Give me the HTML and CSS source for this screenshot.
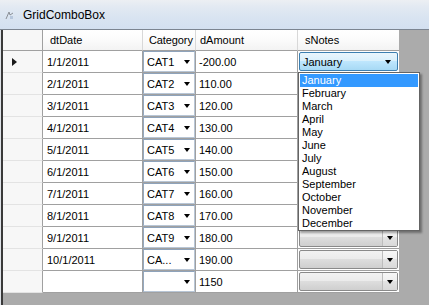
FILE: index.html
```html
<!DOCTYPE html>
<html>
<head>
<meta charset="utf-8">
<link rel="stylesheet" href="styles.css">
</head>
<body>
<div class="window">
  <div class="titlebar">
    <svg class="appicon" width="9" height="9" viewBox="0 0 9 9">
      <path d="M1 8 L4 1 L5 4 L8 2" fill="none" stroke="#8a8f96" stroke-width="1"/>
      <rect x="5" y="5" width="3" height="3" fill="#b7c7dc"/>
    </svg>
    <span class="title">GridComboBox</span>
  </div>
  <div class="client">
    <div class="frame"></div>
    <div class="area">
      <div class="grid">
        <div class="hcell corner"></div>
        <div class="hcell h-date">dtDate</div>
        <div class="hcell h-cat">Category</div>
        <div class="hcell h-amt">dAmount</div>
        <div class="hcell h-notes">sNotes</div>

        <div class="rh"><span class="pointer"></span></div>
        <div class="cell date">1/1/2011</div>
        <div class="cell cat"><div class="combo"><span class="ctext">CAT1</span><span class="arr"></span></div></div>
        <div class="cell amt">-200.00</div>
        <div class="cell notes"><div class="bcombo"><span class="ctext">January</span><span class="arr"></span></div></div>

        <div class="rh"></div>
        <div class="cell date">2/1/2011</div>
        <div class="cell cat"><div class="combo"><span class="ctext">CAT2</span><span class="arr"></span></div></div>
        <div class="cell amt">110.00</div>
        <div class="cell notes"><div class="gcombo"><span class="gbtn"><span class="arr"></span></span></div></div>

        <div class="rh"></div>
        <div class="cell date">3/1/2011</div>
        <div class="cell cat"><div class="combo"><span class="ctext">CAT3</span><span class="arr"></span></div></div>
        <div class="cell amt">120.00</div>
        <div class="cell notes"><div class="gcombo"><span class="gbtn"><span class="arr"></span></span></div></div>

        <div class="rh"></div>
        <div class="cell date">4/1/2011</div>
        <div class="cell cat"><div class="combo"><span class="ctext">CAT4</span><span class="arr"></span></div></div>
        <div class="cell amt">130.00</div>
        <div class="cell notes"><div class="gcombo"><span class="gbtn"><span class="arr"></span></span></div></div>

        <div class="rh"></div>
        <div class="cell date">5/1/2011</div>
        <div class="cell cat"><div class="combo"><span class="ctext">CAT5</span><span class="arr"></span></div></div>
        <div class="cell amt">140.00</div>
        <div class="cell notes"><div class="gcombo"><span class="gbtn"><span class="arr"></span></span></div></div>

        <div class="rh"></div>
        <div class="cell date">6/1/2011</div>
        <div class="cell cat"><div class="combo"><span class="ctext">CAT6</span><span class="arr"></span></div></div>
        <div class="cell amt">150.00</div>
        <div class="cell notes"><div class="gcombo"><span class="gbtn"><span class="arr"></span></span></div></div>

        <div class="rh"></div>
        <div class="cell date">7/1/2011</div>
        <div class="cell cat"><div class="combo"><span class="ctext">CAT7</span><span class="arr"></span></div></div>
        <div class="cell amt">160.00</div>
        <div class="cell notes"><div class="gcombo"><span class="gbtn"><span class="arr"></span></span></div></div>

        <div class="rh"></div>
        <div class="cell date">8/1/2011</div>
        <div class="cell cat"><div class="combo"><span class="ctext">CAT8</span><span class="arr"></span></div></div>
        <div class="cell amt">170.00</div>
        <div class="cell notes"><div class="gcombo"><span class="gbtn"><span class="arr"></span></span></div></div>

        <div class="rh"></div>
        <div class="cell date">9/1/2011</div>
        <div class="cell cat"><div class="combo"><span class="ctext">CAT9</span><span class="arr"></span></div></div>
        <div class="cell amt">180.00</div>
        <div class="cell notes"><div class="gcombo"><span class="gbtn"><span class="arr"></span></span></div></div>

        <div class="rh"></div>
        <div class="cell date">10/1/2011</div>
        <div class="cell cat"><div class="combo"><span class="ctext">CA...</span><span class="arr"></span></div></div>
        <div class="cell amt">190.00</div>
        <div class="cell notes"><div class="gcombo"><span class="gbtn"><span class="arr"></span></span></div></div>

        <div class="rh"></div>
        <div class="cell date"></div>
        <div class="cell cat"><div class="combo"><span class="ctext"></span><span class="arr"></span></div></div>
        <div class="cell amt">1150</div>
        <div class="cell notes"><div class="gcombo"><span class="gbtn"><span class="arr"></span></span></div></div>
      </div>
    </div>
    <ul class="dropdown">
      <li class="sel">January</li>
      <li>February</li>
      <li>March</li>
      <li>April</li>
      <li>May</li>
      <li>June</li>
      <li>July</li>
      <li>August</li>
      <li>September</li>
      <li>October</li>
      <li>November</li>
      <li>December</li>
    </ul>
  </div>
</div>
</body>
</html>
```

FILE: styles.css
```css
* { box-sizing: border-box; }
html, body { margin: 0; padding: 0; }
body {
  width: 429px;
  height: 305px;
  overflow: hidden;
  font-family: "Liberation Sans", Arial, sans-serif;
  font-size: 11px;
  color: #000;
  background: #ababab;
}
.window {
  width: 429px;
  height: 305px;
  display: flex;
  flex-direction: column;
}
.titlebar {
  height: 29px;
  flex: none;
  display: flex;
  align-items: center;
  padding-left: 5px;
  background: linear-gradient(to bottom, #eceff3 0%, #e2e9f2 25%, #d9e4f1 60%, #d3e0f0 100%);
}
.appicon { margin-right: 9px; margin-top: 1px; }
.title {
  font-size: 12px;
  color: #000;
  margin-top: 1px;
}
.client {
  position: relative;
  flex: 1;
  display: flex;
  border-top: 1px solid #7c8591;
}
.frame {
  width: 3px;
  flex: none;
  background: #3a3a3a;
  border-left: 1px solid #dfe3e8;
}
.area {
  flex: 1;
  background: #ababab;
}
.grid {
  display: grid;
  grid-template-columns: 40px 100px 53px 102px 101px;
  grid-template-rows: 21px;
  grid-auto-rows: 22px;
  width: 396px;
}
.hcell {
  background: linear-gradient(to bottom, #ffffff 0%, #fbfbfb 50%, #f3f3f3 100%);
  border-right: 1px solid #d8d8d8;
  border-bottom: 1px solid #a0a0a0;
  display: flex;
  align-items: center;
  white-space: nowrap;
  overflow: hidden;
}
.corner { border-right: 1px solid #a0a0a0; background: #f7f7f7; }
.h-date { padding-left: 7px; }
.h-cat { padding-left: 6px; letter-spacing: -0.1px; }
.h-amt { padding-left: 4px; }
.h-notes { padding-left: 7px; border-right: none; }
.rh {
  background: #f7f7f7;
  border-right: 1px solid #a0a0a0;
  border-bottom: 1px solid #e3e3e3;
  display: flex;
  align-items: center;
  padding-left: 9px;
}
.pointer {
  width: 0;
  height: 0;
  border-top: 4.5px solid transparent;
  border-bottom: 4.5px solid transparent;
  border-left: 5px solid #1a1a1a;
}
.cell {
  background: #fff;
  border-right: 1px solid #a0a0a0;
  border-bottom: 1px solid #a0a0a0;
  display: flex;
  align-items: center;
  white-space: nowrap;
  overflow: hidden;
}
.date { padding-left: 4px; }
.amt { padding-left: 3px; }
.cat { align-items: stretch; }
.notes {
  border-right: none;
  align-items: stretch;
  padding: 1px 1px 1px 1px;
}
.combo {
  flex: 1;
  display: flex;
  align-items: center;
  justify-content: space-between;
  border: 1px solid #b8c6d6;
  border-top-color: #8ea3bb;
  border-left-color: #95a9c0;
  background: #fff;
  padding: 0 3px 0 3px;
}
.arr {
  width: 0;
  height: 0;
  border-left: 3.5px solid transparent;
  border-right: 3.5px solid transparent;
  border-top: 4px solid #000;
  margin-right: 1px;
}
.bcombo {
  flex: 1;
  display: flex;
  align-items: center;
  justify-content: space-between;
  border: 1px solid #3c7fb1;
  border-radius: 2px;
  background: linear-gradient(to bottom, #eaf6fd 0%, #d9f0fc 45%, #bee6fd 50%, #a7d9f5 100%);
  padding: 0 5px 0 3px;
}
.gcombo {
  flex: 1;
  display: flex;
  justify-content: flex-end;
  border: 1px solid #8a8a8a;
  border-radius: 2px;
  background: linear-gradient(to bottom, #f2f2f2 0%, #ebebeb 45%, #dddddd 50%, #cfcfcf 100%);
}
.gbtn {
  width: 15px;
  display: flex;
  align-items: center;
  justify-content: center;
  border-left: 1px solid #bdbdbd;
  background: linear-gradient(to bottom, #f7f7f7 0%, #efefef 45%, #e3e3e3 50%, #d9d9d9 100%);
}
.gbtn .arr { margin-right: 0; }
.dropdown {
  position: absolute;
  left: 298px;
  top: 42px;
  width: 122px;
  height: 159px;
  margin: 0;
  padding: 1px 1px;
  list-style: none;
  background: #fff;
  border: 1px solid #646464;
  box-shadow: 2px 2px 2px rgba(0, 0, 0, 0.35);
}
.dropdown li {
  height: 13px;
  line-height: 13px;
  padding-left: 2px;
  white-space: nowrap;
}
.dropdown li.sel {
  background: #3399ff;
  color: #fff;
}
```
